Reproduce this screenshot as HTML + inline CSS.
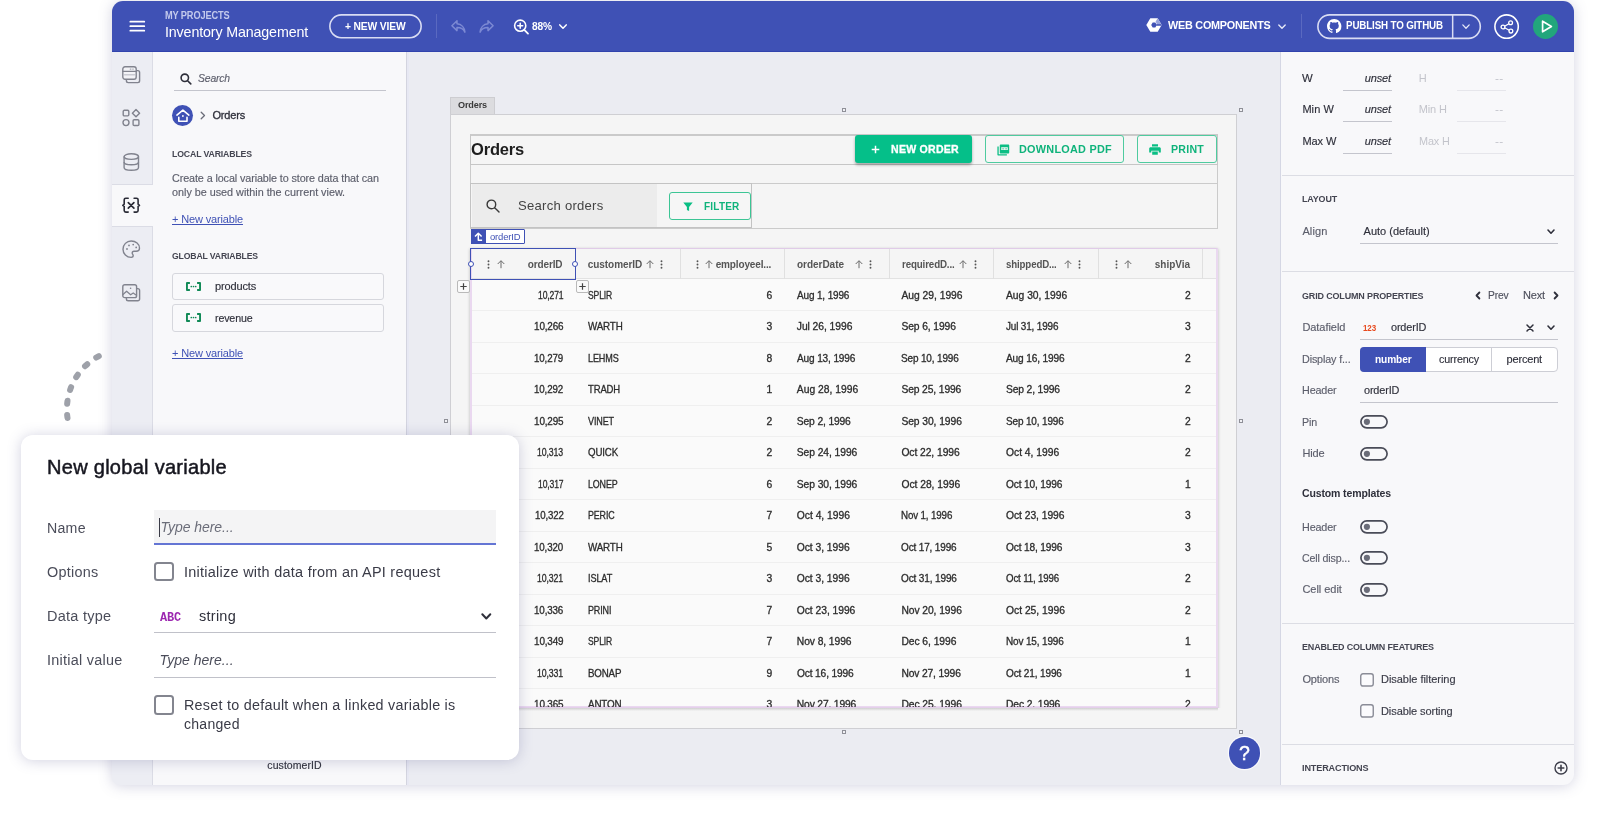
<!DOCTYPE html>
<html lang="en"><head>
<meta charset="utf-8">
<title>Inventory Management - App Builder</title>
<style>
*{box-sizing:border-box;margin:0;padding:0}
html,body{width:1600px;height:820px;overflow:hidden;background:#fff}
body{will-change:transform;position:relative;font-family:"Liberation Sans",sans-serif;color:#2f303b}
.a{position:absolute}
.t{position:absolute;white-space:nowrap;line-height:1.2;font-size:11px}
.b{font-weight:700}
.i{font-style:italic}
svg{position:absolute;overflow:visible}
.win{position:absolute;left:112px;top:1px;width:1462px;height:784px;border-radius:11px 11px 11px 8px;background:#ebecf2;
 box-shadow:0 1px 14px rgba(85,85,140,.26)}
.clip{position:absolute;left:112px;top:1px;width:1462px;height:784px;border-radius:11px 11px 11px 8px;overflow:hidden}
.org{position:absolute;left:-112px;top:-1px;width:1600px;height:820px}
.line{position:absolute;height:1px;background:#c9cad2}
.lbl{color:#5c5e6b;-webkit-text-stroke:.15px #5c5e6b}
.dk{color:#2f303b;-webkit-text-stroke:.15px #2f303b}
.sec{font-weight:700;font-size:9.5px;color:#444551}
.g{font-size:10.3px;color:#2c2c2c;-webkit-text-stroke:.3px #2c2c2c}
.gh{font-size:10px;color:#555;font-weight:700}
.sb{-webkit-text-stroke:.45px currentColor}
</style>
</head>
<body>
<div class="win"></div>
<div class="clip"><div class="org">
<div class="a" style="left:0;top:0;width:1600px;height:53px;z-index:3">
<div class="a" style="left:112px;top:1px;width:1462px;height:51.300px;background:#3f51b5;border-bottom:1.300px solid #3143ad"></div>
<!-- hamburger -->
<svg style="left:130px;top:20px" width="15" height="13" viewBox="0 0 15 13"><path d="M0.300 1.700h14M0.300 6.200h14M0.300 10.700h14" stroke="#fff" stroke-width="1.7" stroke-linecap="round"></path></svg>
<span class="t b" style="left: 165px; font-size: 10.2px; color: rgb(195, 201, 236); letter-spacing: -0.15px; transform-origin: 0px 50%; transform: scaleX(0.906); top: 10.02px;">MY PROJECTS</span>
<span class="t" style="left: 165px; font-size: 15px; color: rgb(255, 255, 255); letter-spacing: -0.15px; transform-origin: 0px 50%; transform: scaleX(0.951); top: 23.02px;">Inventory Management</span>
<svg style="left:328.800px;top:14px" width="93" height="24.600" viewBox="0 0 93 24.600"><rect x=".85" y=".85" width="91.300" height="22.900" rx="11.450" fill="none" stroke="#d9dcf3" stroke-width="1.600"></rect></svg>
<span class="t b" style="left: 345px; font-size: 10.5px; color: rgb(255, 255, 255); letter-spacing: -0.15px; transform-origin: 0px 50%; transform: scaleX(0.979); top: 20.02px;">+ NEW VIEW</span>
<div class="a" style="left:436px;top:14px;width:1px;height:24px;background:#5a69c0"></div>
<!-- undo / redo -->
<svg style="left:450.5px;top:20px" width="15" height="13" viewBox="0 0 15 13"><path d="M6 0.8L0.9 5.7 6 10.6V7.6C9.6 7.5 12.3 8.8 13.9 12.1 13.6 7.6 10.6 4.2 6 3.8Z" fill="none" stroke="#7c89d3" stroke-width="1.500" stroke-linejoin="round"></path></svg>
<svg style="left:478.5px;top:20px" width="15" height="13" viewBox="0 0 15 13"><path d="M9 0.8L14.1 5.7 9 10.6V7.6C5.4 7.5 2.7 8.8 1.1 12.1 1.4 7.6 4.4 4.2 9 3.8Z" fill="none" stroke="#7c89d3" stroke-width="1.500" stroke-linejoin="round"></path></svg>
<!-- zoom -->
<svg style="left:513px;top:19px" width="16" height="16" viewBox="0 0 16 16"><circle cx="7.2" cy="6.7" r="5.6" fill="none" stroke="#fff" stroke-width="1.6"></circle><path d="M11.3 10.9L15 14.6" stroke="#fff" stroke-width="1.8" stroke-linecap="round"></path><path d="M7.2 4.2v5M4.7 6.7h5" stroke="#fff" stroke-width="1.5" stroke-linecap="round"></path></svg>
<span class="t b" style="left: 531.5px; font-size: 10.5px; color: rgb(255, 255, 255); letter-spacing: -0.15px; transform-origin: 0px 50%; transform: scaleX(0.972); top: 20.02px;">88%</span>
<svg style="left:559px;top:24px" width="8" height="6" viewBox="0 0 8 6"><path d="M0.8 0.9L4 4.3 7.2 0.9" fill="none" stroke="#fff" stroke-width="1.5" stroke-linecap="round" stroke-linejoin="round"></path></svg>
<!-- web components -->
<svg style="left:1146px;top:18.200px" width="16" height="14" viewBox="0 0 16 14"><path d="M4.300 .3H11.700L15.700 7 11.700 13.700H4.300L.3 7Z" fill="#fff"></path><path d="M9.600 3.400L11.700 .3 15.700 7H11.200Z" fill="#98a3dc"></path><path d="M6.700 4.500H9.300L10.800 7 9.300 9.500H6.700L5.200 7Z" fill="#3f51b5"></path><path d="M10.300 6.200H15.200L15.700 7 15.300 7.700H10.300Z" fill="#3f51b5"></path></svg>
<span class="t b" style="left: 1168px; font-size: 10.8px; color: rgb(255, 255, 255); letter-spacing: -0.22px; top: 19.02px;">WEB COMPONENTS</span>
<svg style="left:1278.3px;top:23.8px" width="8" height="6" viewBox="0 0 8 6"><path d="M0.8 0.9L4 4.3 7.2 0.9" fill="none" stroke="#e3e6f6" stroke-width="1.4" stroke-linecap="round" stroke-linejoin="round"></path></svg>
<div class="a" style="left:1301.3px;top:14px;width:1px;height:24px;background:#5a69c0"></div>
<!-- publish pill -->
<svg style="left:1316.500px;top:13.700px" width="164.200" height="25.200" viewBox="0 0 164.200 25.200"><rect x=".85" y=".85" width="162.500" height="23.500" rx="11.750" fill="none" stroke="#d9dcf3" stroke-width="1.600"></rect><path d="M135.700 1v23.200" stroke="#d9dcf3" stroke-width="1.500"></path></svg>
<svg style="left:1327px;top:19.2px" width="14.4" height="14.4" viewBox="0 0 16 16"><path fill="#fff" d="M8 0C3.58 0 0 3.58 0 8c0 3.54 2.29 6.53 5.47 7.59.4.07.55-.17.55-.38 0-.19-.01-.82-.01-1.49-2.01.37-2.53-.49-2.69-.94-.09-.23-.48-.94-.82-1.13-.28-.15-.68-.52-.01-.53.63-.01 1.08.58 1.23.82.72 1.21 1.87.87 2.33.66.07-.52.28-.87.51-1.07-1.78-.2-3.64-.89-3.64-3.95 0-.87.31-1.59.82-2.15-.08-.2-.36-1.02.08-2.12 0 0 .67-.21 2.2.82.64-.18 1.32-.27 2-.27.68 0 1.36.09 2 .27 1.53-1.04 2.2-.82 2.2-.82.44 1.1.16 1.92.08 2.12.51.56.82 1.27.82 2.15 0 3.07-1.87 3.75-3.65 3.95.29.25.54.73.54 1.48 0 1.07-.01 1.93-.01 2.2 0 .21.15.46.55.38A8.013 8.013 0 0016 8c0-4.42-3.58-8-8-8z"></path></svg>
<span class="t b" style="left: 1346px; font-size: 10.8px; color: rgb(255, 255, 255); letter-spacing: -0.15px; transform-origin: 0px 50%; transform: scaleX(0.906); top: 19.02px;">PUBLISH TO GITHUB</span>
<svg style="left:1462.2px;top:23.6px" width="8" height="6" viewBox="0 0 8 6"><path d="M0.8 0.9L4 4.3 7.2 0.9" fill="none" stroke="#e3e6f6" stroke-width="1.3" stroke-linecap="round" stroke-linejoin="round"></path></svg>
<!-- share -->
<svg style="left:1494.100px;top:13.500px" width="25.200" height="25.200" viewBox="0 0 25.200 25.200"><circle cx="12.600" cy="12.600" r="11.700" fill="none" stroke="#fff" stroke-width="1.600"></circle></svg>
<svg style="left:1499.5px;top:19.5px" width="14" height="14" viewBox="0 0 14 14"><path d="M3.2 7L10.3 3M3.2 7L10.6 11" stroke="#fff" stroke-width="1.3"></path><circle cx="10.6" cy="2.8" r="1.9" fill="#3f51b5" stroke="#fff" stroke-width="1.3"></circle><circle cx="3" cy="7" r="1.9" fill="#3f51b5" stroke="#fff" stroke-width="1.3"></circle><circle cx="10.9" cy="11.1" r="1.9" fill="#3f51b5" stroke="#fff" stroke-width="1.3"></circle></svg>
<!-- play -->
<div class="a" style="left:1533px;top:13.6px;width:25px;height:25px;background:#22a67c;border-radius:50%"></div>
<svg style="left:1540.5px;top:19.5px" width="12" height="13" viewBox="0 0 12 13"><path d="M1.6 1.2L10.4 6.5 1.6 11.8Z" fill="none" stroke="#fff" stroke-width="1.7" stroke-linejoin="round"></path></svg>
</div>
<div class="a" style="left:112px;top:52px;width:40.5px;height:733px;background:#ecedf3;border-right:1px solid #dbdce5"></div>
<div class="a" style="left:112px;top:184.3px;width:41px;height:42.5px;background:#f8f8fa;border-top:1px solid #dbdce5;border-bottom:1px solid #dbdce5"></div>
<!-- views -->
<svg style="left:121.5px;top:65.5px" width="19" height="18" viewBox="0 0 19 18" fill="none" stroke="#81838e" stroke-width="1.4" stroke-linejoin="round" stroke-linecap="round"><path d="M14.6 4.6h1.2a1.8 1.8 0 0 1 1.8 1.8v8.4a1.8 1.8 0 0 1-1.8 1.8H6.2a1.8 1.8 0 0 1-1.8-1.8v-1.4"></path><rect x=".8" y=".8" width="13.400" height="12.400" rx="2.200" fill="#f3f3f7"></rect><path d="M.8 5.400h13.400" stroke-width="1.300"></path><path d="M2.600 8.700h9.800" stroke="#c9cad2" stroke-width="1.400"></path><path d="M8.300 3.100h.6M10.800 3.100h.4" stroke-width="1.300" stroke="#a5a7b0"></path></svg>
<!-- components -->
<svg style="left:121.500px;top:108.900px" width="19" height="18" viewBox="0 0 19 18" fill="none" stroke="#81838e" stroke-width="1.4" stroke-linejoin="round"><rect x="1.2" y="1.3" width="5.6" height="5.6" rx="1.1"></rect><path d="M14 0.6L17.6 4.2 14 7.8 10.4 4.2Z"></path><circle cx="4" cy="13.6" r="3"></circle><rect x="11.1" y="10.7" width="5.8" height="5.8" rx="1.1"></rect></svg>
<!-- database -->
<svg style="left:122.5px;top:153px" width="17" height="18" viewBox="0 0 17 18" fill="none" stroke="#81838e" stroke-width="1.4"><ellipse cx="8.3" cy="3.6" rx="7.2" ry="2.8"></ellipse><path d="M1.1 3.6v10.8c0 1.6 3.2 2.8 7.2 2.8s7.2-1.2 7.2-2.8V3.6"></path><path d="M1.1 9c0 1.6 3.2 2.8 7.2 2.8s7.2-1.2 7.2-2.8"></path></svg>
<!-- variables {x} -->
<svg style="left:121.800px;top:197px" width="18.500" height="17" viewBox="0 0 18.500 17" fill="none" stroke="#2a2b36" stroke-width="1.600" stroke-linecap="round" stroke-linejoin="round"><path d="M6.200 1.200H3.800Q2.200 1.200 2.200 2.800V7.200L.8 8.300l1.400 1.100v4.100q0 1.600 1.600 1.600h2.400"></path><path d="M12.100 1.200h2.400q1.600 0 1.600 1.600v4.400l1.400 1.100-1.400 1.100v4.100q0 1.600-1.600 1.600h-2.400"></path><path d="M6.300 5.600l5.600 5.500M11.900 5.600l-5.600 5.500" stroke-width="1.700"></path></svg>
<!-- palette -->
<svg style="left:121.8px;top:239.500px" width="18.5" height="19" viewBox="0 0 18.5 19" fill="none" stroke="#81838e" stroke-width="1.4" stroke-linejoin="round"><path d="M9.200 1C4.600 1 1 4.600 1 9.200s3.600 8.200 8.200 8.200c1.300 0 2-.9 2-1.800 0-.5-.2-.9-.5-1.300-.3-.3-.5-.8-.5-1.200 0-1 .8-1.800 1.800-1.800h2.100c2 0 3.400-1.300 3.400-3.200C17.500 4.200 13.800 1 9.200 1Z"></path><circle cx="5" cy="9" r=".9" fill="#81838e" stroke="none"></circle><circle cx="7" cy="5.400" r=".9" fill="#81838e" stroke="none"></circle><circle cx="11.200" cy="4.600" r=".9" fill="#81838e" stroke="none"></circle><circle cx="14.200" cy="7.400" r=".9" fill="#81838e" stroke="none"></circle></svg>
<!-- image -->
<svg style="left:121.5px;top:283.500px" width="19" height="18.500" viewBox="0 0 19 18.500" fill="none" stroke="#81838e" stroke-width="1.400" stroke-linejoin="round" stroke-linecap="round"><path d="M14.600 4.600h1.200a1.800 1.800 0 0 1 1.800 1.800v8.600a1.800 1.800 0 0 1-1.800 1.800H6.200a1.800 1.800 0 0 1-1.800-1.800v-1.400"></path><rect x=".8" y=".8" width="13.800" height="12.800" rx="1.900"></rect><path d="M1 10.500l3.600-3.300 4 3.600 2.600-1.900 3.200 2.300" stroke-width="1.200"></path><circle cx="8.600" cy="4.300" r=".8" fill="#81838e" stroke="none"></circle></svg>
<div class="a" style="left:153px;top:52px;width:254px;height:733px;background:#f8f8fa;border-right:1.600px solid #d3d4df"></div>
<div class="a" style="left:407px;top:52px;width:2px;height:733px;background:#e7e8f3"></div>
<!-- search -->
<svg style="left:180px;top:72.500px" width="12" height="12" viewBox="0 0 12 12" fill="none" stroke="#2f303b" stroke-width="1.600" stroke-linecap="round"><circle cx="4.800" cy="4.800" r="3.700"></circle><path d="M7.600 7.700l3.200 3.200"></path></svg>
<span class="t i lbl" style="left: 198px; font-size: 11px; letter-spacing: -0.15px; transform-origin: 0px 50%; transform: scaleX(0.942); top: 72.02px;">Search</span>
<div class="line" style="left:173.500px;top:90px;width:212px;background:#c4c5cd"></div>
<!-- breadcrumb -->
<div class="a" style="left:171.900px;top:104.800px;width:21.100px;height:21.100px;border-radius:50%;background:#3f51b5"></div>
<svg style="left:175.500px;top:108.500px" width="14" height="14" viewBox="0 0 14 14" fill="none" stroke="#fff" stroke-width="1.600" stroke-linejoin="round" stroke-linecap="round"><path d="M.9 6.100L6.900 1.200l6 4.900"></path><path d="M2.800 8.200v4h8.200v-4"></path><circle cx="6.900" cy="7" r=".9" fill="#fff" stroke="none"></circle></svg>
<svg style="left:200px;top:111px" width="6" height="9" viewBox="0 0 6 9" fill="none" stroke="#6a6c78" stroke-width="1.300" stroke-linecap="round" stroke-linejoin="round"><path d="M1.200 1.200l3.300 3.300-3.300 3.300"></path></svg>
<span class="t dk sb" style="left: 212.4px; font-size: 11px; -webkit-text-stroke-width: 0.3px; letter-spacing: -0.17px; top: 109.02px;">Orders</span>
<!-- local variables -->
<span class="t sec" style="left: 172px; letter-spacing: -0.15px; transform-origin: 0px 50%; transform: scaleX(0.918); top: 148.02px;">LOCAL VARIABLES</span>
<span class="t lbl" style="left: 172px; font-size: 10.8px; letter-spacing: -0.11px; top: 172.02px;">Create a local variable to store data that can</span>
<span class="t lbl" style="left: 172px; font-size: 10.8px; letter-spacing: -0.01px; top: 186.02px;">only be used within the current view.</span>
<span class="t" style="left: 172px; font-size: 11px; color: rgb(63, 81, 181); text-decoration: underline; letter-spacing: -0.15px; top: 213.02px;">+ New variable</span>
<!-- global variables -->
<span class="t sec" style="left: 172px; letter-spacing: -0.15px; transform-origin: 0px 50%; transform: scaleX(0.911); top: 250.02px;">GLOBAL VARIABLES</span>
<div class="a" style="left:172px;top:273px;width:211.600px;height:27.200px;border:1px solid #d6d7dd;border-radius:3px;background:#f9f9fb"></div>
<div class="a" style="left:172px;top:304.400px;width:211.600px;height:27.200px;border:1px solid #d6d7dd;border-radius:3px;background:#f9f9fb"></div>
<svg style="left:186.400px;top:281.800px" width="15" height="9" viewBox="0 0 15 9" fill="none" stroke="#118a57" stroke-width="1.900" stroke-linejoin="round"><path d="M3.900 .95H.95v7.100h2.950M11.100 .95h2.950v7.100h-2.950"></path><circle cx="5.300" cy="4.500" r=".85" fill="#118a57" stroke="none"></circle><circle cx="7.500" cy="4.500" r=".85" fill="#118a57" stroke="none"></circle><circle cx="9.700" cy="4.500" r=".85" fill="#118a57" stroke="none"></circle></svg>
<svg style="left:186.400px;top:313.200px" width="15" height="9" viewBox="0 0 15 9" fill="none" stroke="#118a57" stroke-width="1.900" stroke-linejoin="round"><path d="M3.900 .95H.95v7.100h2.950M11.100 .95h2.950v7.100h-2.950"></path><circle cx="5.300" cy="4.500" r=".85" fill="#118a57" stroke="none"></circle><circle cx="7.500" cy="4.500" r=".85" fill="#118a57" stroke="none"></circle><circle cx="9.700" cy="4.500" r=".85" fill="#118a57" stroke="none"></circle></svg>
<span class="t dk" style="left: 215px; font-size: 11px; letter-spacing: -0.15px; top: 280.02px;">products</span>
<span class="t dk" style="left: 215px; font-size: 11px; letter-spacing: -0.15px; transform-origin: 0px 50%; transform: scaleX(0.969); top: 312.02px;">revenue</span>
<span class="t" style="left: 172px; font-size: 11px; color: rgb(63, 81, 181); text-decoration: underline; letter-spacing: -0.15px; top: 347.02px;">+ New variable</span>
<span class="t dk" style="left: 267.3px; font-size: 10.5px; letter-spacing: 0.08px; top: 759.02px;">customerID</span>
<div class="a" style="left:450px;top:96.500px;width:44.500px;height:18px;background:#dcdcdf;border:1px solid #cdcdd1;border-bottom:none"></div>
<span class="t b" style="left: 458px; font-size: 9.5px; color: rgb(58, 58, 58); letter-spacing: -0.15px; transform-origin: 0px 50%; transform: scaleX(0.958); top: 99.02px;">Orders</span>
<div class="a" style="left:450px;top:113.500px;width:787.200px;height:615px;background:#f5f5f5;border:1.200px solid #cfcfd3"></div>
<div class="a" style="left:842px;top:108px;width:4px;height:4px;border:1px solid #8f9098;background:#f1f1f5"></div>
<div class="a" style="left:1239px;top:108px;width:4px;height:4px;border:1px solid #8f9098;background:#f1f1f5"></div>
<div class="a" style="left:444px;top:419px;width:4px;height:4px;border:1px solid #8f9098;background:#f1f1f5"></div>
<div class="a" style="left:1239px;top:419px;width:4px;height:4px;border:1px solid #8f9098;background:#f1f1f5"></div>
<div class="a" style="left:842px;top:730px;width:4px;height:4px;border:1px solid #8f9098;background:#f1f1f5"></div>
<div class="a" style="left:1239px;top:730px;width:4px;height:4px;border:1px solid #8f9098;background:#f1f1f5"></div>
<div class="a" style="left:470px;top:133.500px;width:748px;height:95px;border:1px solid #cbcbcb"></div>
<div class="a" style="left:470px;top:133.500px;width:748px;height:31px;border:1px solid #c6c6c6;border-width:2px 1px 1px 1px;border-top-color:#cacaca"></div>
<div class="a" style="left:470px;top:182.800px;width:748px;height:1px;background:#cbcbcb"></div>
<span class="t b" style="left: 471px; font-size: 16.5px; color: rgb(30, 30, 30); letter-spacing: -0.18px; top: 140.02px;">Orders</span>
<div class="a" style="left:855px;top:135.400px;width:117px;height:28px;background:#05bf89;border-radius:3px;box-shadow:0 2px 3px rgba(0,0,0,.32)"></div>
<svg style="left:870.500px;top:144.500px" width="9" height="9" viewBox="0 0 9 9"><path d="M4.500 .7v7.600M.7 4.500h7.600" stroke="#fff" stroke-width="1.500"></path></svg>
<span class="t b" style="left: 891px; font-size: 10.5px; color: rgb(255, 255, 255); -webkit-text-stroke: 0.3px rgb(255, 255, 255); letter-spacing: 0.25px; transform-origin: 0px 50%; transform: scaleX(1.006); top: 143.02px;">NEW ORDER</span>
<div class="a" style="left:984.500px;top:135.400px;width:139.500px;height:28px;border:1.300px solid #4fcb9f;border-radius:3px;background:#f6f6f6"></div>
<svg style="left:997px;top:143.500px" width="12.500" height="12" viewBox="0 0 12.500 12" fill="#0bbe84"><path d="M3.800 .4h7.400c.6 0 1 .4 1 1v7c0 .6-.4 1-1 1H3.800c-.6 0-1-.4-1-1v-7c0-.6.4-1 1-1Z"></path><path d="M.4 2.600h1.300v7.700h8.200v1.300H1.400c-.6 0-1-.4-1-1Z"></path><path d="M4.200 3.300h6.600v2.600H4.200Z" fill="#f6f6f6"></path><path d="M4.900 3.900h.5v1.500h-.5ZM6.400 3.900h.5v1.500h-.5ZM7.900 3.900h.5v1.500h-.5ZM9.400 3.900h.5v1.500h-.5Z"></path></svg>
<span class="t b" style="left: 1019.3px; font-size: 10.5px; color: rgb(15, 179, 123); letter-spacing: 0.25px; transform-origin: 0px 50%; transform: scaleX(1.034); top: 143.02px;">DOWNLOAD PDF</span>
<div class="a" style="left:1136.500px;top:135.400px;width:80px;height:28px;border:1.300px solid #4fcb9f;border-radius:3px;background:#f6f6f6"></div>
<svg style="left:1149px;top:144px" width="12" height="11" viewBox="0 0 12 11" fill="#0bbe84"><path d="M3 .3h6v2.300H3Z"></path><path d="M1.600 3.200h8.800c.8 0 1.400.6 1.400 1.400v3.800H9.700V6.700H2.300v1.700H.2V4.600c0-.8.600-1.400 1.400-1.400Z"></path><path d="M3.200 7.500h5.600v3.200H3.200Z"></path></svg>
<span class="t b" style="left: 1171px; font-size: 10.5px; color: rgb(15, 179, 123); letter-spacing: 0.25px; transform-origin: 0px 50%; transform: scaleX(1.008); top: 143.02px;">PRINT</span>
<div class="a" style="left:470px;top:182.800px;width:282px;height:45.700px;border:1px solid #c3c3c3;border-width:1.500px 1px 1.500px 1.500px"></div>
<div class="a" style="left:471.500px;top:184.300px;width:185.500px;height:42.700px;background:#ececec"></div>
<svg style="left:486px;top:199.300px" width="14" height="14" viewBox="0 0 14 14" fill="none" stroke="#3a3a3a" stroke-width="1.400" stroke-linecap="round"><circle cx="5.400" cy="5.400" r="4.300"></circle><path d="M8.700 8.700l4.300 4.300"></path></svg>
<span class="t" style="left: 518px; font-size: 13px; color: rgb(68, 68, 68); letter-spacing: 0.25px; transform-origin: 0px 50%; transform: scaleX(1.007); top: 198.02px;">Search orders</span>
<div class="a" style="left:669.200px;top:192.300px;width:82px;height:27.500px;border:1.300px solid #3cc595;border-radius:3px;background:#f6f6f6"></div>
<svg style="left:682.800px;top:201.500px" width="10" height="10" viewBox="0 0 10 10"><path d="M.3 .6h9.400L6.100 4.900v4.200L3.900 8V4.900Z" fill="#0bbe84"></path></svg>
<span class="t b" style="left: 704px; font-size: 10px; color: rgb(15, 179, 123); letter-spacing: 0.21px; transform-origin: 0px 50%; transform: scaleX(1); top: 201.02px;">FILTER</span>
<div class="a" style="left:471px;top:229.300px;width:53.800px;height:15.200px;background:#fff;border:1px solid #3f51b5;border-radius:1px"></div>
<div class="a" style="left:471px;top:229.300px;width:15px;height:15.200px;background:#3f51b5"></div>
<svg style="left:473.800px;top:232.300px" width="9.500" height="9.500" viewBox="0 0 9.500 9.500" fill="none" stroke="#fff" stroke-width="1.500" stroke-linejoin="round"><path d="M1 4.600L4.300 1.200l3.300 3.400"></path><path d="M4.300 1.800v6.400h3.800"></path></svg>
<span class="t" style="left: 490px; font-size: 9.5px; color: rgb(63, 81, 181); letter-spacing: -0.15px; transform-origin: 0px 50%; transform: scaleX(0.995); top: 231.02px;">orderID</span>
<div class="a" style="left:470px;top:247.800px;width:747.800px;height:460.400px;background:#fafafa;border:2px solid #ead8f0;border-top:1.500px solid #e0cbe8;box-shadow:0 1px 3px rgba(0,0,0,.25);overflow:hidden"></div>
<div class="a" style="left:471.500px;top:249.300px;width:744.800px;height:30px;background:#f5f5f5;border-bottom:1px solid #e2e2e2"></div>
<div class="a" style="left:679.5px;top:249.300px;width:1px;height:30px;background:#e0e0e0"></div>
<div class="a" style="left:784px;top:249.300px;width:1px;height:30px;background:#e0e0e0"></div>
<div class="a" style="left:888.5px;top:249.300px;width:1px;height:30px;background:#e0e0e0"></div>
<div class="a" style="left:993px;top:249.300px;width:1px;height:30px;background:#e0e0e0"></div>
<div class="a" style="left:1097.5px;top:249.300px;width:1px;height:30px;background:#e0e0e0"></div>
<div class="a" style="left:1202px;top:249.300px;width:1px;height:30px;background:#e0e0e0"></div>
<div class="a" style="left:471.500px;top:310.4px;width:744.800px;height:1px;background:#efefef"></div>
<div class="a" style="left:471.500px;top:341.9px;width:744.800px;height:1px;background:#efefef"></div>
<div class="a" style="left:471.500px;top:373.4px;width:744.800px;height:1px;background:#efefef"></div>
<div class="a" style="left:471.500px;top:404.9px;width:744.800px;height:1px;background:#efefef"></div>
<div class="a" style="left:471.500px;top:436.4px;width:744.800px;height:1px;background:#efefef"></div>
<div class="a" style="left:471.500px;top:467.9px;width:744.800px;height:1px;background:#efefef"></div>
<div class="a" style="left:471.500px;top:499.4px;width:744.800px;height:1px;background:#efefef"></div>
<div class="a" style="left:471.500px;top:530.9px;width:744.800px;height:1px;background:#efefef"></div>
<div class="a" style="left:471.500px;top:562.4px;width:744.800px;height:1px;background:#efefef"></div>
<div class="a" style="left:471.500px;top:593.9px;width:744.800px;height:1px;background:#efefef"></div>
<div class="a" style="left:471.500px;top:625.4px;width:744.800px;height:1px;background:#efefef"></div>
<div class="a" style="left:471.500px;top:656.9px;width:744.800px;height:1px;background:#efefef"></div>
<div class="a" style="left:471.500px;top:688.4px;width:744.800px;height:1px;background:#efefef"></div>
<svg style="left:487.4px;top:259.5px" width="3" height="9" viewBox="0 0 3 9" fill="#555"><circle cx="1.500" cy="1.300" r=".95"></circle><circle cx="1.500" cy="4.500" r=".95"></circle><circle cx="1.500" cy="7.700" r=".95"></circle></svg>
<svg style="left:496.6px;top:260.0px" width="8" height="8.500" viewBox="0 0 8 8.500" fill="none" stroke="#6a6a6a" stroke-width="1" stroke-linejoin="round"><path d="M.7 4L4 .7 7.300 4M4 .9v7.300"></path></svg>
<span class="t gh" style="letter-spacing: -0.11px; top: 259.02px; left: 527.7px;">orderID</span>
<span class="t gh" style="left: 587.8px; letter-spacing: -0.06px; top: 259.02px;">customerID</span>
<svg style="left:645.5px;top:260.0px" width="8" height="8.500" viewBox="0 0 8 8.500" fill="none" stroke="#6a6a6a" stroke-width="1" stroke-linejoin="round"><path d="M.7 4L4 .7 7.300 4M4 .9v7.300"></path></svg>
<svg style="left:660.0px;top:259.5px" width="3" height="9" viewBox="0 0 3 9" fill="#555"><circle cx="1.500" cy="1.300" r=".95"></circle><circle cx="1.500" cy="4.500" r=".95"></circle><circle cx="1.500" cy="7.700" r=".95"></circle></svg>
<svg style="left:696.3px;top:259.5px" width="3" height="9" viewBox="0 0 3 9" fill="#555"><circle cx="1.500" cy="1.300" r=".95"></circle><circle cx="1.500" cy="4.500" r=".95"></circle><circle cx="1.500" cy="7.700" r=".95"></circle></svg>
<svg style="left:705.2px;top:260.0px" width="8" height="8.500" viewBox="0 0 8 8.500" fill="none" stroke="#6a6a6a" stroke-width="1" stroke-linejoin="round"><path d="M.7 4L4 .7 7.300 4M4 .9v7.300"></path></svg>
<span class="t gh" style="left: 715.7px; letter-spacing: -0.14px; top: 259.02px;">employeeI...</span>
<span class="t gh" style="left: 797px; letter-spacing: -0.03px; top: 259.02px;">orderDate</span>
<svg style="left:854.5px;top:260.0px" width="8" height="8.500" viewBox="0 0 8 8.500" fill="none" stroke="#6a6a6a" stroke-width="1" stroke-linejoin="round"><path d="M.7 4L4 .7 7.300 4M4 .9v7.300"></path></svg>
<svg style="left:868.7px;top:259.5px" width="3" height="9" viewBox="0 0 3 9" fill="#555"><circle cx="1.500" cy="1.300" r=".95"></circle><circle cx="1.500" cy="4.500" r=".95"></circle><circle cx="1.500" cy="7.700" r=".95"></circle></svg>
<span class="t gh" style="left: 901.6px; letter-spacing: -0.15px; transform-origin: 0px 50%; transform: scaleX(0.978); top: 259.02px;">requiredD...</span>
<svg style="left:959.0px;top:260.0px" width="8" height="8.500" viewBox="0 0 8 8.500" fill="none" stroke="#6a6a6a" stroke-width="1" stroke-linejoin="round"><path d="M.7 4L4 .7 7.300 4M4 .9v7.300"></path></svg>
<svg style="left:973.5px;top:259.5px" width="3" height="9" viewBox="0 0 3 9" fill="#555"><circle cx="1.500" cy="1.300" r=".95"></circle><circle cx="1.500" cy="4.500" r=".95"></circle><circle cx="1.500" cy="7.700" r=".95"></circle></svg>
<span class="t gh" style="left: 1006.3px; letter-spacing: -0.15px; transform-origin: 0px 50%; transform: scaleX(0.97); top: 259.02px;">shippedD...</span>
<svg style="left:1063.8px;top:260.0px" width="8" height="8.500" viewBox="0 0 8 8.500" fill="none" stroke="#6a6a6a" stroke-width="1" stroke-linejoin="round"><path d="M.7 4L4 .7 7.300 4M4 .9v7.300"></path></svg>
<svg style="left:1078.0px;top:259.5px" width="3" height="9" viewBox="0 0 3 9" fill="#555"><circle cx="1.500" cy="1.300" r=".95"></circle><circle cx="1.500" cy="4.500" r=".95"></circle><circle cx="1.500" cy="7.700" r=".95"></circle></svg>
<svg style="left:1114.5px;top:259.5px" width="3" height="9" viewBox="0 0 3 9" fill="#555"><circle cx="1.500" cy="1.300" r=".95"></circle><circle cx="1.500" cy="4.500" r=".95"></circle><circle cx="1.500" cy="7.700" r=".95"></circle></svg>
<svg style="left:1123.8px;top:260.0px" width="8" height="8.500" viewBox="0 0 8 8.500" fill="none" stroke="#6a6a6a" stroke-width="1" stroke-linejoin="round"><path d="M.7 4L4 .7 7.300 4M4 .9v7.300"></path></svg>
<span class="t gh" style="letter-spacing: -0.03px; top: 259.02px; left: 1154.8px;">shipVia</span>
<span class="t g" style="letter-spacing: -0.15px; transform-origin: 0px 50%; transform: scaleX(0.833); top: 290.02px; left: 537.7px;">10,271</span>
<span class="t g" style="left: 587.8px; letter-spacing: -0.15px; transform-origin: 0px 50%; transform: scaleX(0.831); top: 290.02px;">SPLIR</span>
<span class="t g" style="top: 290.02px; left: 766.5px;">6</span>
<span class="t g" style="left: 796.8px; letter-spacing: -0.15px; transform-origin: 0px 50%; transform: scaleX(0.97); top: 290.02px;">Aug 1, 1996</span>
<span class="t g" style="left: 901.4px; letter-spacing: -0.01px; top: 290.02px;">Aug 29, 1996</span>
<span class="t g" style="left: 1006px; letter-spacing: -0.01px; top: 290.02px;">Aug 30, 1996</span>
<span class="t g" style="top: 290.02px; left: 1185px;">2</span>
<span class="t g" style="letter-spacing: -0.15px; transform-origin: 0px 50%; transform: scaleX(0.964); top: 321.02px; left: 533.7px;">10,266</span>
<span class="t g" style="left: 587.8px; letter-spacing: -0.15px; transform-origin: 0px 50%; transform: scaleX(0.95); top: 321.02px;">WARTH</span>
<span class="t g" style="top: 321.02px; left: 766.5px;">3</span>
<span class="t g" style="left: 796.8px; letter-spacing: -0.05px; top: 321.02px;">Jul 26, 1996</span>
<span class="t g" style="left: 901.4px; letter-spacing: -0.1px; top: 321.02px;">Sep 6, 1996</span>
<span class="t g" style="left: 1006px; letter-spacing: -0.15px; transform-origin: 0px 50%; transform: scaleX(0.963); top: 321.02px;">Jul 31, 1996</span>
<span class="t g" style="top: 321.02px; left: 1185px;">3</span>
<span class="t g" style="letter-spacing: -0.15px; transform-origin: 0px 50%; transform: scaleX(0.947); top: 353.02px; left: 534.2px;">10,279</span>
<span class="t g" style="left: 587.8px; letter-spacing: -0.15px; transform-origin: 0px 50%; transform: scaleX(0.881); top: 353.02px;">LEHMS</span>
<span class="t g" style="top: 353.02px; left: 766.5px;">8</span>
<span class="t g" style="left: 796.8px; letter-spacing: -0.15px; transform-origin: 0px 50%; transform: scaleX(0.979); top: 353.02px;">Aug 13, 1996</span>
<span class="t g" style="left: 901.4px; letter-spacing: -0.15px; transform-origin: 0px 50%; transform: scaleX(0.97); top: 353.02px;">Sep 10, 1996</span>
<span class="t g" style="left: 1006px; letter-spacing: -0.15px; transform-origin: 0px 50%; transform: scaleX(0.984); top: 353.02px;">Aug 16, 1996</span>
<span class="t g" style="top: 353.02px; left: 1185px;">2</span>
<span class="t g" style="letter-spacing: -0.15px; transform-origin: 0px 50%; transform: scaleX(0.947); top: 384.02px; left: 534.2px;">10,292</span>
<span class="t g" style="left: 587.8px; letter-spacing: -0.15px; transform-origin: 0px 50%; transform: scaleX(0.922); top: 384.02px;">TRADH</span>
<span class="t g" style="top: 384.02px; left: 766.5px;">1</span>
<span class="t g" style="left: 796.8px; letter-spacing: 0.01px; top: 384.02px;">Aug 28, 1996</span>
<span class="t g" style="left: 901.4px; letter-spacing: -0.12px; top: 384.02px;">Sep 25, 1996</span>
<span class="t g" style="left: 1006px; letter-spacing: -0.15px; top: 384.02px;">Sep 2, 1996</span>
<span class="t g" style="top: 384.02px; left: 1185px;">2</span>
<span class="t g" style="letter-spacing: -0.15px; transform-origin: 0px 50%; transform: scaleX(0.964); top: 416.02px; left: 533.7px;">10,295</span>
<span class="t g" style="left: 587.8px; letter-spacing: -0.15px; transform-origin: 0px 50%; transform: scaleX(0.879); top: 416.02px;">VINET</span>
<span class="t g" style="top: 416.02px; left: 766.5px;">2</span>
<span class="t g" style="left: 796.8px; letter-spacing: -0.15px; top: 416.02px;">Sep 2, 1996</span>
<span class="t g" style="left: 901.4px; letter-spacing: -0.07px; top: 416.02px;">Sep 30, 1996</span>
<span class="t g" style="left: 1006px; letter-spacing: -0.15px; transform-origin: 0px 50%; transform: scaleX(0.97); top: 416.02px;">Sep 10, 1996</span>
<span class="t g" style="top: 416.02px; left: 1185px;">2</span>
<span class="t g" style="letter-spacing: -0.15px; transform-origin: 0px 50%; transform: scaleX(0.849); top: 447.02px; left: 537.2px;">10,313</span>
<span class="t g" style="left: 587.8px; letter-spacing: -0.15px; transform-origin: 0px 50%; transform: scaleX(0.941); top: 447.02px;">QUICK</span>
<span class="t g" style="top: 447.02px; left: 766.5px;">2</span>
<span class="t g" style="left: 796.8px; letter-spacing: -0.07px; top: 447.02px;">Sep 24, 1996</span>
<span class="t g" style="left: 901.4px; letter-spacing: -0.06px; top: 447.02px;">Oct 22, 1996</span>
<span class="t g" style="left: 1006px; letter-spacing: -0.01px; top: 447.02px;">Oct 4, 1996</span>
<span class="t g" style="top: 447.02px; left: 1185px;">2</span>
<span class="t g" style="letter-spacing: -0.15px; transform-origin: 0px 50%; transform: scaleX(0.833); top: 479.02px; left: 537.7px;">10,317</span>
<span class="t g" style="left: 587.8px; letter-spacing: -0.15px; transform-origin: 0px 50%; transform: scaleX(0.863); top: 479.02px;">LONEP</span>
<span class="t g" style="top: 479.02px; left: 766.5px;">6</span>
<span class="t g" style="left: 796.8px; letter-spacing: -0.07px; top: 479.02px;">Sep 30, 1996</span>
<span class="t g" style="left: 901.4px; letter-spacing: -0.02px; top: 479.02px;">Oct 28, 1996</span>
<span class="t g" style="left: 1006px; letter-spacing: -0.15px; transform-origin: 0px 50%; transform: scaleX(0.985); top: 479.02px;">Oct 10, 1996</span>
<span class="t g" style="top: 479.02px; left: 1185px;">1</span>
<span class="t g" style="letter-spacing: -0.15px; transform-origin: 0px 50%; transform: scaleX(0.938); top: 510.02px; left: 534.5px;">10,322</span>
<span class="t g" style="left: 587.8px; letter-spacing: -0.15px; transform-origin: 0px 50%; transform: scaleX(0.865); top: 510.02px;">PERIC</span>
<span class="t g" style="top: 510.02px; left: 766.5px;">7</span>
<span class="t g" style="left: 796.8px; letter-spacing: -0.01px; top: 510.02px;">Oct 4, 1996</span>
<span class="t g" style="left: 901.4px; letter-spacing: -0.15px; transform-origin: 0px 50%; transform: scaleX(0.95); top: 510.02px;">Nov 1, 1996</span>
<span class="t g" style="left: 1006px; letter-spacing: -0.04px; top: 510.02px;">Oct 23, 1996</span>
<span class="t g" style="top: 510.02px; left: 1185px;">3</span>
<span class="t g" style="letter-spacing: -0.15px; transform-origin: 0px 50%; transform: scaleX(0.947); top: 542.02px; left: 534.2px;">10,320</span>
<span class="t g" style="left: 587.8px; letter-spacing: -0.15px; transform-origin: 0px 50%; transform: scaleX(0.95); top: 542.02px;">WARTH</span>
<span class="t g" style="top: 542.02px; left: 766.5px;">5</span>
<span class="t g" style="left: 796.8px; letter-spacing: -0.04px; top: 542.02px;">Oct 3, 1996</span>
<span class="t g" style="left: 901.4px; letter-spacing: -0.15px; transform-origin: 0px 50%; transform: scaleX(0.971); top: 542.02px;">Oct 17, 1996</span>
<span class="t g" style="left: 1006px; letter-spacing: -0.15px; transform-origin: 0px 50%; transform: scaleX(0.985); top: 542.02px;">Oct 18, 1996</span>
<span class="t g" style="top: 542.02px; left: 1185px;">3</span>
<span class="t g" style="letter-spacing: -0.15px; transform-origin: 0px 50%; transform: scaleX(0.849); top: 573.02px; left: 537.2px;">10,321</span>
<span class="t g" style="left: 587.8px; letter-spacing: -0.15px; transform-origin: 0px 50%; transform: scaleX(0.889); top: 573.02px;">ISLAT</span>
<span class="t g" style="top: 573.02px; left: 766.5px;">3</span>
<span class="t g" style="left: 796.8px; letter-spacing: -0.04px; top: 573.02px;">Oct 3, 1996</span>
<span class="t g" style="left: 901.4px; letter-spacing: -0.15px; transform-origin: 0px 50%; transform: scaleX(0.976); top: 573.02px;">Oct 31, 1996</span>
<span class="t g" style="left: 1006px; letter-spacing: -0.15px; transform-origin: 0px 50%; transform: scaleX(0.941); top: 573.02px;">Oct 11, 1996</span>
<span class="t g" style="top: 573.02px; left: 1185px;">2</span>
<span class="t g" style="letter-spacing: -0.15px; transform-origin: 0px 50%; transform: scaleX(0.954); top: 605.02px; left: 534px;">10,336</span>
<span class="t g" style="left: 587.8px; letter-spacing: -0.15px; transform-origin: 0px 50%; transform: scaleX(0.872); top: 605.02px;">PRINI</span>
<span class="t g" style="top: 605.02px; left: 766.5px;">7</span>
<span class="t g" style="left: 796.8px; letter-spacing: -0.04px; top: 605.02px;">Oct 23, 1996</span>
<span class="t g" style="left: 901.4px; letter-spacing: -0.07px; top: 605.02px;">Nov 20, 1996</span>
<span class="t g" style="left: 1006px; top: 605.02px;">Oct 25, 1996</span>
<span class="t g" style="top: 605.02px; left: 1185px;">2</span>
<span class="t g" style="letter-spacing: -0.15px; transform-origin: 0px 50%; transform: scaleX(0.964); top: 636.02px; left: 533.7px;">10,349</span>
<span class="t g" style="left: 587.8px; letter-spacing: -0.15px; transform-origin: 0px 50%; transform: scaleX(0.831); top: 636.02px;">SPLIR</span>
<span class="t g" style="top: 636.02px; left: 766.5px;">7</span>
<span class="t g" style="left: 796.8px; letter-spacing: -0.08px; top: 636.02px;">Nov 8, 1996</span>
<span class="t g" style="left: 901.4px; letter-spacing: -0.05px; top: 636.02px;">Dec 6, 1996</span>
<span class="t g" style="left: 1006px; letter-spacing: -0.15px; transform-origin: 0px 50%; transform: scaleX(0.97); top: 636.02px;">Nov 15, 1996</span>
<span class="t g" style="top: 636.02px; left: 1185px;">1</span>
<span class="t g" style="letter-spacing: -0.15px; transform-origin: 0px 50%; transform: scaleX(0.849); top: 668.02px; left: 537.2px;">10,331</span>
<span class="t g" style="left: 587.8px; letter-spacing: -0.15px; transform-origin: 0px 50%; transform: scaleX(0.943); top: 668.02px;">BONAP</span>
<span class="t g" style="top: 668.02px; left: 766.5px;">9</span>
<span class="t g" style="left: 796.8px; letter-spacing: -0.15px; transform-origin: 0px 50%; transform: scaleX(0.99); top: 668.02px;">Oct 16, 1996</span>
<span class="t g" style="left: 901.4px; letter-spacing: -0.16px; top: 668.02px;">Nov 27, 1996</span>
<span class="t g" style="left: 1006px; letter-spacing: -0.15px; transform-origin: 0px 50%; transform: scaleX(0.976); top: 668.02px;">Oct 21, 1996</span>
<span class="t g" style="top: 668.02px; left: 1185px;">1</span>
<span class="t g" style="letter-spacing: -0.15px; transform-origin: 0px 50%; transform: scaleX(0.964); top: 699.02px; left: 533.7px;">10,365</span>
<span class="t g" style="left: 587.8px; letter-spacing: -0.15px; transform-origin: 0px 50%; transform: scaleX(0.954); top: 699.02px;">ANTON</span>
<span class="t g" style="top: 699.02px; left: 766.5px;">3</span>
<span class="t g" style="left: 796.8px; letter-spacing: -0.16px; top: 699.02px;">Nov 27, 1996</span>
<span class="t g" style="left: 901.4px; letter-spacing: -0.07px; top: 699.02px;">Dec 25, 1996</span>
<span class="t g" style="left: 1006px; letter-spacing: -0.12px; top: 699.02px;">Dec 2, 1996</span>
<span class="t g" style="top: 699.02px; left: 1185px;">2</span>
<div class="a" style="left:469px;top:706.700px;width:750px;height:1.500px;background:#e4cfeb"></div>
<div class="a" style="left:466px;top:708.200px;width:756px;height:20px;background:#f5f5f5"></div>
<div class="a" style="left:470px;top:708.200px;width:748px;height:2.500px;background:linear-gradient(#cfcfcf,#f5f5f5)"></div>
<div class="a" style="left:470.300px;top:248.200px;width:105.500px;height:31.600px;border:1.600px solid #3f51b5"></div>
<div class="a" style="left:467.6px;top:260.8px;width:6.400px;height:6.400px;border:1.200px solid #3f51b5;border-radius:50%;background:#fff"></div>
<div class="a" style="left:572.1px;top:260.8px;width:6.400px;height:6.400px;border:1.200px solid #3f51b5;border-radius:50%;background:#fff"></div>
<div class="a" style="left:457px;top:280px;width:13px;height:13px;border:1px solid #b9b9b9;border-radius:2px;background:#fafafa"></div>
<svg style="left:460px;top:283px" width="7" height="7" viewBox="0 0 7 7"><path d="M3.500 .3v6.400M.3 3.500h6.400" stroke="#444" stroke-width="1.200"></path></svg>
<div class="a" style="left:576px;top:280px;width:13px;height:13px;border:1px solid #b9b9b9;border-radius:2px;background:#fafafa"></div>
<svg style="left:579px;top:283px" width="7" height="7" viewBox="0 0 7 7"><path d="M3.500 .3v6.400M.3 3.500h6.400" stroke="#444" stroke-width="1.200"></path></svg>
<div class="a" style="left:1228.800px;top:737.400px;width:31.600px;height:31.600px;border-radius:50%;background:#3f51b5;box-shadow:0 0 0 1.200px rgba(255,255,255,.75)"></div>
<span class="t sb" style="font-size: 19.5px; color: rgb(255, 255, 255); top: 742.02px; left: 1239.1px;">?</span>
<div class="a" style="left:1279.800px;top:52px;width:294.700px;height:733px;background:#f8f8fa;border-left:1.500px solid #d5d7e4"></div>
<!-- size rows -->
<span class="t dk" style="left: 1302.4px; letter-spacing: 0.25px; transform-origin: 0px 50%; transform: scaleX(1.034); top: 72.02px;">W</span>
<span class="t dk" style="left: 1302.4px; letter-spacing: 0.07px; top: 103.02px;">Min W</span>
<span class="t dk" style="left: 1302.4px; letter-spacing: -0.05px; top: 135.02px;">Max W</span>
<span class="t i dk" style="letter-spacing: -0.18px; top: 72.02px; left: 1364.8px;">unset</span>
<span class="t i dk" style="letter-spacing: -0.18px; top: 103.02px; left: 1364.8px;">unset</span>
<span class="t i dk" style="letter-spacing: -0.18px; top: 135.02px; left: 1364.8px;">unset</span>
<div class="line" style="left:1343.400px;top:89.900px;width:48.800px;background:#c4c5cd"></div>
<div class="line" style="left:1343.400px;top:121.300px;width:48.800px;background:#c4c5cd"></div>
<div class="line" style="left:1343.400px;top:152.700px;width:48.800px;background:#c4c5cd"></div>
<span class="t" style="left: 1418.8px; color: rgb(195, 196, 203); letter-spacing: 0.05px; top: 72.02px;">H</span>
<span class="t" style="left: 1418.8px; color: rgb(195, 196, 203); letter-spacing: -0.15px; top: 103.02px;">Min H</span>
<span class="t" style="left: 1418.8px; color: rgb(195, 196, 203); letter-spacing: -0.15px; transform-origin: 0px 50%; transform: scaleX(0.986); top: 135.02px;">Max H</span>
<span class="t" style="color: rgb(195, 196, 203); letter-spacing: 0.25px; transform-origin: 0px 50%; transform: scaleX(1.086); top: 72.02px; left: 1495.1px;">--</span>
<span class="t" style="color: rgb(195, 196, 203); letter-spacing: 0.25px; transform-origin: 0px 50%; transform: scaleX(1.086); top: 103.02px; left: 1495.1px;">--</span>
<span class="t" style="color: rgb(195, 196, 203); letter-spacing: 0.25px; transform-origin: 0px 50%; transform: scaleX(1.086); top: 135.02px; left: 1495.1px;">--</span>
<div class="line" style="left:1456.800px;top:89.900px;width:48.800px;background:#e6e6eb"></div>
<div class="line" style="left:1456.800px;top:121.300px;width:48.800px;background:#e6e6eb"></div>
<div class="line" style="left:1456.800px;top:152.700px;width:48.800px;background:#e6e6eb"></div>
<div class="line" style="left:1281.500px;top:174.700px;width:293px;background:#dcdde4"></div>
<!-- layout -->
<span class="t sec" style="left: 1302.4px; letter-spacing: -0.15px; transform-origin: 0px 50%; transform: scaleX(0.939); top: 193.02px;">LAYOUT</span>
<span class="t lbl" style="left: 1302.4px; letter-spacing: 0.11px; top: 225.02px;">Align</span>
<span class="t dk" style="left: 1363.6px; top: 225.02px;">Auto (default)</span>
<svg style="left:1546.500px;top:228.500px" width="8" height="6" viewBox="0 0 8 6"><path d="M1 1L4 4.200 7 1" fill="none" stroke="#2f303b" stroke-width="1.600" stroke-linecap="round" stroke-linejoin="round"></path></svg>
<div class="line" style="left:1360px;top:242.600px;width:197.600px;background:#c4c5cd"></div>
<div class="line" style="left:1281.500px;top:270.600px;width:293px;background:#dcdde4"></div>
<!-- grid column properties -->
<span class="t sec" style="left: 1302.4px; letter-spacing: -0.15px; transform-origin: 0px 50%; transform: scaleX(0.944); top: 290.02px;">GRID COLUMN PROPERTIES</span>
<svg style="left:1475.300px;top:291px" width="6" height="9" viewBox="0 0 6 9" fill="none" stroke="#2f303b" stroke-width="1.800" stroke-linecap="round" stroke-linejoin="round"><path d="M4.400 1.500L1.500 4.500l2.900 3"></path></svg>
<span class="t lbl" style="left: 1488px; color: rgb(75, 77, 89); letter-spacing: -0.15px; transform-origin: 0px 50%; transform: scaleX(0.935); top: 289.02px;">Prev</span>
<span class="t lbl" style="left: 1523px; color: rgb(75, 77, 89); letter-spacing: -0.16px; top: 289.02px;">Next</span>
<svg style="left:1552.500px;top:291px" width="6" height="9" viewBox="0 0 6 9" fill="none" stroke="#2f303b" stroke-width="1.800" stroke-linecap="round" stroke-linejoin="round"><path d="M1.600 1.500l2.900 3-2.900 3"></path></svg>
<span class="t lbl" style="left: 1302.4px; letter-spacing: -0.05px; top: 321.02px;">Datafield</span>
<span class="t b" style="left: 1363px; font-size: 9px; color: rgb(232, 73, 29); letter-spacing: -0.15px; transform-origin: 0px 50%; transform: scaleX(0.892); top: 323.02px;">123</span>
<span class="t dk" style="left: 1391.4px; letter-spacing: -0.15px; transform-origin: 0px 50%; transform: scaleX(0.988); top: 321.02px;">orderID</span>
<svg style="left:1525.500px;top:324.200px" width="8" height="8" viewBox="0 0 8 8"><path d="M1 1l6 6M7 1L1 7" stroke="#2f303b" stroke-width="1.500" stroke-linecap="round"></path></svg>
<svg style="left:1546.500px;top:325.400px" width="8" height="6" viewBox="0 0 8 6"><path d="M1 1L4 4.200 7 1" fill="none" stroke="#2f303b" stroke-width="1.600" stroke-linecap="round" stroke-linejoin="round"></path></svg>
<div class="line" style="left:1360px;top:339.200px;width:197.600px;background:#c4c5cd"></div>
<span class="t lbl" style="left: 1302.4px; letter-spacing: -0.15px; transform-origin: 0px 50%; transform: scaleX(0.979); top: 353.02px;">Display f...</span>
<div class="a" style="left:1360px;top:347px;width:197.800px;height:24.500px;border:1px solid #cdced5;border-radius:4px;background:#fff"></div>
<div class="a" style="left:1360px;top:347px;width:66px;height:24.500px;border-radius:4px 0 0 4px;background:#3f51b5"></div>
<div class="a" style="left:1491px;top:347.500px;width:1px;height:23.500px;background:#cdced5"></div>
<span class="t b" style="color: rgb(255, 255, 255); letter-spacing: -0.15px; transform-origin: 0px 50%; transform: scaleX(0.926); top: 353.02px; left: 1374.6px;">number</span>
<span class="t dk" style="letter-spacing: -0.15px; transform-origin: 0px 50%; transform: scaleX(0.976); top: 353.02px; left: 1438.5px;">currency</span>
<span class="t dk" style="letter-spacing: -0.17px; top: 353.02px; left: 1506.5px;">percent</span>
<span class="t lbl" style="left: 1302.4px; letter-spacing: -0.15px; transform-origin: 0px 50%; transform: scaleX(0.98); top: 384.02px;">Header</span>
<span class="t dk" style="left: 1363.6px; letter-spacing: -0.15px; transform-origin: 0px 50%; transform: scaleX(0.988); top: 384.02px;">orderID</span>
<div class="line" style="left:1360px;top:402.200px;width:197.600px;background:#c4c5cd"></div>
<span class="t lbl" style="left: 1302.4px; letter-spacing: -0.15px; transform-origin: 0px 50%; transform: scaleX(0.971); top: 416.02px;">Pin</span>
<svg style="left:1360.0px;top:415.3px" width="28" height="13.700" viewBox="0 0 28 13.700"><rect x=".9" y=".9" width="26.200" height="11.900" rx="5.950" fill="none" stroke="#4a4c58" stroke-width="1.700"></rect><circle cx="6.900" cy="6.850" r="3.100" fill="#6b6d79"></circle></svg>
<span class="t lbl" style="left: 1302.4px; letter-spacing: -0.16px; top: 447.02px;">Hide</span>
<svg style="left:1360.0px;top:446.8px" width="28" height="13.700" viewBox="0 0 28 13.700"><rect x=".9" y=".9" width="26.200" height="11.900" rx="5.950" fill="none" stroke="#4a4c58" stroke-width="1.700"></rect><circle cx="6.900" cy="6.850" r="3.100" fill="#6b6d79"></circle></svg>
<span class="t b" style="left: 1302.4px; color: rgb(47, 48, 59); letter-spacing: -0.15px; transform-origin: 0px 50%; transform: scaleX(0.957); top: 487.02px;">Custom templates</span>
<span class="t lbl" style="left: 1302.4px; letter-spacing: -0.15px; transform-origin: 0px 50%; transform: scaleX(0.98); top: 521.02px;">Header</span>
<svg style="left:1360.0px;top:519.8px" width="28" height="13.700" viewBox="0 0 28 13.700"><rect x=".9" y=".9" width="26.200" height="11.900" rx="5.950" fill="none" stroke="#4a4c58" stroke-width="1.700"></rect><circle cx="6.900" cy="6.850" r="3.100" fill="#6b6d79"></circle></svg>
<span class="t lbl" style="left: 1302.4px; letter-spacing: -0.15px; transform-origin: 0px 50%; transform: scaleX(0.968); top: 552.02px;">Cell disp...</span>
<svg style="left:1360.0px;top:551.3px" width="28" height="13.700" viewBox="0 0 28 13.700"><rect x=".9" y=".9" width="26.200" height="11.900" rx="5.950" fill="none" stroke="#4a4c58" stroke-width="1.700"></rect><circle cx="6.900" cy="6.850" r="3.100" fill="#6b6d79"></circle></svg>
<span class="t lbl" style="left: 1302.4px; letter-spacing: -0.03px; top: 583.02px;">Cell edit</span>
<svg style="left:1360.0px;top:582.8px" width="28" height="13.700" viewBox="0 0 28 13.700"><rect x=".9" y=".9" width="26.200" height="11.900" rx="5.950" fill="none" stroke="#4a4c58" stroke-width="1.700"></rect><circle cx="6.900" cy="6.850" r="3.100" fill="#6b6d79"></circle></svg>
<div class="line" style="left:1281.500px;top:622.800px;width:293px;background:#dcdde4"></div>
<span class="t sec" style="left: 1302.4px; letter-spacing: -0.15px; transform-origin: 0px 50%; transform: scaleX(0.943); top: 641.02px;">ENABLED COLUMN FEATURES</span>
<span class="t lbl" style="left: 1302.4px; letter-spacing: -0.13px; top: 673.02px;">Options</span>
<svg style="left:1360.0px;top:672.6px" width="14" height="14" viewBox="0 0 14 14"><rect x=".75" y=".75" width="12.500" height="12.300" rx="2.200" fill="#fbfbfd" stroke="#8a8c97" stroke-width="1.400"></rect></svg>
<span class="t dk" style="left: 1381px; color: rgb(61, 62, 74); letter-spacing: -0.04px; top: 673.02px;">Disable filtering</span>
<svg style="left:1360.0px;top:704.1px" width="14" height="14" viewBox="0 0 14 14"><rect x=".75" y=".75" width="12.500" height="12.300" rx="2.200" fill="#fbfbfd" stroke="#8a8c97" stroke-width="1.400"></rect></svg>
<span class="t dk" style="left: 1381px; color: rgb(61, 62, 74); letter-spacing: -0.08px; top: 705.02px;">Disable sorting</span>
<div class="line" style="left:1281.500px;top:744px;width:293px;background:#dcdde4"></div>
<span class="t sec" style="left: 1302.4px; letter-spacing: -0.15px; transform-origin: 0px 50%; transform: scaleX(0.957); top: 762.02px;">INTERACTIONS</span>
<svg style="left:1554.300px;top:760.800px" width="14" height="14" viewBox="0 0 14 14" fill="none" stroke="#3d3e4a" stroke-width="1.400" stroke-linecap="round"><circle cx="7" cy="7" r="6"></circle><path d="M7 4.200v5.600M4.200 7h5.600" stroke-width="1.600"></path></svg>
</div></div>
<!-- dotted arc -->
<svg style="left:55px;top:345px" width="60" height="85" viewBox="55 345 60 85"><path d="M98.810 356.080A60.500 60.500 0 0 0 67.530 418.130" fill="none" stroke="#9ea1a9" stroke-width="6" stroke-linecap="round" stroke-dasharray="3 11.150"></path></svg>
<div class="a" style="left:21px;top:434.600px;width:498px;height:325.500px;background:#fff;border-radius:12px;box-shadow:0 1px 14px rgba(85,85,140,.27)"></div>
<span class="t sb" style="left: 46.6px; font-size: 19.3px; color: rgb(22, 22, 31); letter-spacing: 0.25px; transform-origin: 0px 50%; transform: scaleX(1.04); top: 456.02px;">New global variable</span>
<span class="t" style="left: 46.6px; font-size: 13.8px; color: rgb(75, 77, 90); letter-spacing: 0.25px; transform-origin: 0px 50%; transform: scaleX(1.026); top: 521.02px;">Name</span>
<div class="a" style="left:154.400px;top:510.400px;width:341.600px;height:34.600px;background:#f4f4f5;border-bottom:2px solid #6475d4"></div>
<div class="a" style="left:159.400px;top:518px;width:1px;height:18.600px;background:#3a3b47"></div>
<span class="t i" style="left: 160.6px; font-size: 14px; color: rgb(107, 109, 121); letter-spacing: -0.06px; top: 519.02px;">Type here...</span>
<span class="t" style="left: 46.6px; font-size: 13.8px; color: rgb(75, 77, 90); letter-spacing: 0.25px; transform-origin: 0px 50%; transform: scaleX(1.044); top: 565.02px;">Options</span>
<div class="a" style="left:154.400px;top:562px;width:19.400px;height:19.400px;border:2px solid #83858f;border-radius:3.500px;background:#fff"></div>
<span class="t" style="left: 184.3px; font-size: 13.8px; color: rgb(58, 59, 71); letter-spacing: 0.25px; transform-origin: 0px 50%; transform: scaleX(1.048); top: 565.02px;">Initialize with data from an API request</span>
<span class="t" style="left: 46.6px; font-size: 13.8px; color: rgb(75, 77, 90); letter-spacing: 0.25px; transform-origin: 0px 50%; transform: scaleX(1.05); top: 609.02px;">Data type</span>
<span class="t b" style="left: 159.6px; font-family: &quot;Liberation Mono&quot;, monospace; font-size: 12.3px; color: rgb(156, 39, 176); letter-spacing: -0.15px; transform-origin: 0px 50%; transform: scaleX(0.968); top: 611.02px;">ABC</span>
<span class="t" style="left: 199px; font-size: 13.8px; color: rgb(47, 48, 59); letter-spacing: 0.25px; transform-origin: 0px 50%; transform: scaleX(1.05); top: 609.02px;">string</span>
<svg style="left:480.800px;top:612.600px" width="10.500" height="7.500" viewBox="0 0 10.500 7.500"><path d="M1.300 1.300l4 4.200 4-4.200" fill="none" stroke="#2f303b" stroke-width="2" stroke-linecap="round" stroke-linejoin="round"></path></svg>
<div class="a" style="left:154.400px;top:632px;width:341.600px;height:1.200px;background:#c0c1c9"></div>
<span class="t" style="left: 46.6px; font-size: 13.8px; color: rgb(75, 77, 90); letter-spacing: 0.25px; transform-origin: 0px 50%; transform: scaleX(1.045); top: 653.02px;">Initial value</span>
<span class="t i" style="left: 159.6px; font-size: 14px; color: rgb(75, 77, 90); letter-spacing: 0.03px; top: 652.02px;">Type here...</span>
<div class="a" style="left:154.400px;top:676.500px;width:341.600px;height:1px;background:#c0c1c9"></div>
<div class="a" style="left:154.400px;top:695.200px;width:19.400px;height:19.400px;border:2px solid #83858f;border-radius:3.500px;background:#fff"></div>
<span class="t" style="left: 184.3px; font-size: 13.8px; color: rgb(58, 59, 71); letter-spacing: 0.25px; transform-origin: 0px 50%; transform: scaleX(1.039); top: 698.02px;">Reset to default when a linked variable is</span>
<span class="t" style="left: 184.3px; font-size: 13.8px; color: rgb(58, 59, 71); letter-spacing: 0.25px; transform-origin: 0px 50%; transform: scaleX(1.02); top: 717.02px;">changed</span>


</body></html>
